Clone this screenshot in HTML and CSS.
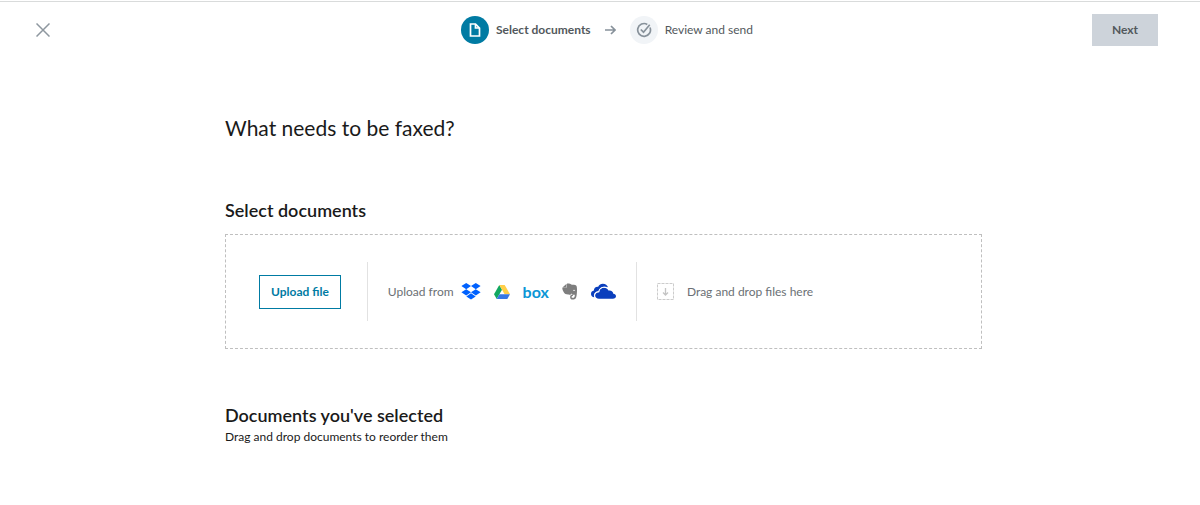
FILE: index.html
```html
<!DOCTYPE html>
<html lang="en">

<head>
    <meta charset="UTF-8">
    <title>Send a fax</title>
    <meta name="viewport" content="width=device-width, initial-scale=1.0">
    <link rel="stylesheet" href="styles.css">
</head>

<body>
    <header class="header">
        <button class="close-btn" type="button" aria-label="Close">
            <svg width="14" height="14" viewBox="0 0 14 14"><path d="M.5.5l13 13M13.5.5l-13 13" fill="none" stroke="#8e979f" stroke-width="1.5"/></svg>
        </button>
        <nav class="steps">
            <a class="step active" href="#documents">
                <span class="step-icon">
                    <svg width="12" height="14" viewBox="0 0 12 14"><path d="M1.5 1h5l4 4v8h-9zM6.5 1v4h4" fill="none" stroke="#fff" stroke-width="1.7"/></svg>
                </span>
                Select documents
            </a>
            <svg class="arrow" width="11" height="10" viewBox="0 0 11 10"><path d="M0 5h10M6 1l4 4-4 4" fill="none" stroke="#87919a" stroke-width="1.7"/></svg>
            <a class="step" href="#review">
                <span class="step-icon">
                    <svg width="16" height="16" viewBox="0 0 16 16"><path d="M14 5.5A6.4 6.4 0 1 1 11.3 2.4M4.8 7.5l2.7 2.7 6.2-7.4" fill="none" stroke="#87919a" stroke-width="1.7"/></svg>
                </span>
                Review and send
            </a>
        </nav>
        <button class="next-btn" type="button">Next</button>
    </header>

    <main class="content" id="documents">
        <h1>What needs to be faxed?</h1>

        <section>
            <h2>Select documents</h2>
            <div class="dropzone">
                <div class="upload">
                    <button class="upload-btn" type="button">Upload file</button>
                </div>
                <div class="sources">
                    <span>Upload from</span>
                    <div class="source-list">
                        <button class="source" type="button" aria-label="Dropbox">
                            <svg width="20" height="17" viewBox="0 0 20 17"><path d="M5.2 0L10 3.1 5.2 6.2.4 3.1zM14.8 0l4.8 3.1-4.8 3.1L10 3.1zM5.2 6.2L10 9.3l-4.8 3.1L.4 9.3zM14.8 6.2l4.8 3.1-4.8 3.1L10 9.3zM5.3 13.4l4.7-3.1 4.7 3.1-4.7 3.1z" fill="#0061fe"/></svg>
                        </button>
                        <button class="source" type="button" aria-label="Google Drive">
                            <svg width="16" height="14" viewBox="0 0 16 14">
                                <path d="M5.3 0L8 4.7 2.7 14 0 9.3z" fill="#11a861"/>
                                <path d="M5.3 0h5.4L16 9.3h-5.4z" fill="#ffcf48"/>
                                <path d="M5.4 9.3H16L13.3 14H2.7z" fill="#3777e3"/>
                            </svg>
                        </button>
                        <button class="source box-logo" type="button">box</button>
                        <button class="source" type="button" aria-label="Evernote">
                            <svg width="16" height="17" viewBox="0 0 16 17">
                                <path d="M4.6.7v2.6c0 .6-.3.9-.9.9H.7zM5 .5C6.4.3 8.4.4 9.1 1.5c1.5.3 4.2.3 5 .9.9.8 1 3.1.9 5.500-.1 3.200-.5 6.200-1.300 7.300-.7 1-1.800 1.300-3 1.300-1.700 0-2.600-1-2.600-2.600 0-1.500 1-2.500 2.800-2.400v1.500c-.8 0-1.300.3-1.300.9s.5.9 1.300.9c1.600 0 1.900-1.100 1.900-3.100-1.300.2-2.700-.4-3.100-1.300-.5 1.100-1.600 1.500-3.600 1.200-2.100-.3-3.600-.8-4.300-2.400C.8 7.500.1 6 .4 4.500h3.500c.8 0 1.100-.4 1.100-1.200z" fill="#7e7e7e"/>
                                <path d="M11 7.8c.2-1.200 1.700-1.400 2.200.1-.8-.3-1.400-.3-2.200-.1z" fill="#fff"/>
                            </svg>
                        </button>
                        <button class="source" type="button" aria-label="OneDrive">
                            <svg width="25" height="17" viewBox="0 0 26 17">
                                <path d="M3.400 14.500C1.400 14.200 0 12.800 0 11c0-1.900 1.300-3.200 3-3.500C3 4.900 5 3.400 7.300 3.700 8.500 1.500 10.200.4 12.300.4c2.700 0 4.800 1.600 5.500 4C12 2.400 8.300 4.800 7.800 8.300c-2.700.1-4.600 1.700-4.600 4.100 0 .8.100 1.500.2 2.100z" fill="#0b3fbd"/>
                                <path d="M8.300 16c-2.300 0-4-1.300-4-3.300s1.700-3.500 4.300-3.400C8.500 6.500 10.800 4.700 13.400 4.700c2.200 0 3.800 1 4.700 2.800 2.800-.6 5 1 5.100 3.400 1.600.3 2.800 1 2.800 2.500 0 1.600-1.400 2.600-3.300 2.600z" fill="#0b3fbd"/>
                                <path d="M3.800 14.500c-1-3.300 1-5.600 4.400-5.800C8.600 5 12.500 2.800 18 4.800" fill="none" stroke="#fff" stroke-width=".9"/>
                            </svg>
                        </button>
                    </div>
                </div>
                <div class="drop-hint">
                    <svg width="17" height="17" viewBox="0 0 17 17">
                        <path d="M.5.5h16v16H.5z" fill="none" stroke="#ccc" stroke-dasharray="3 1"/>
                        <path d="M8.5 5v7M6 9.500L8.500 12 11 9.500" fill="none" stroke="#c4c4c4" stroke-width="1.3"/>
                    </svg>
                    <span>Drag and drop files here</span>
                </div>
            </div>
        </section>

        <section>
            <h2>Documents you've selected</h2>
            <p>Drag and drop documents to reorder them</p>
        </section>
    </main>
</body>

</html>
```
FILE: styles.css
```css
* {
    box-sizing: border-box;
}

body {
    margin: 0;
    padding-top: 1px;
    background: #fff;
    color: #1a1a1a;
    font-family: Lato, "Liberation Sans", sans-serif;
    font-size: 12px;
    line-height: 20px;
}

button {
    padding: 0;
    border: none;
    background: none;
    font: inherit;
    cursor: pointer;
}

svg {
    display: block;
}

.header {
    display: grid;
    grid-template-columns: 1fr auto 1fr;
    align-items: center;
    padding: 12px 22px 12px 36px;
    border-top: 1px solid #d9dbdb;
}

.close-btn {
    justify-self: start;
}

.steps {
    display: flex;
    align-items: center;
    gap: 14px;
}

.step {
    display: flex;
    align-items: center;
    gap: 7px;
    color: #52585c;
    text-decoration: none;
}

.step-icon {
    display: flex;
    align-items: center;
    justify-content: center;
    width: 28px;
    height: 28px;
    border-radius: 50%;
    background: #f1f4f7;
}

.step.active {
    font-weight: bold;
}

.step.active .step-icon {
    background: #007ba3;
}

.next-btn {
    justify-self: end;
    margin-right: 20px;
    padding: 6px 20px;
    background: #cdd3da;
    color: #52585c;
    font-weight: bold;
}

.content {
    max-width: 764px;
    margin: 0 auto;
    padding: 54px 0 54px 7px;
}

h1 {
    margin: 0;
    font-size: 21px;
    font-weight: normal;
    line-height: 32px;
}

h2 {
    margin: 0;
    font-size: 18px;
    font-weight: 600;
    line-height: 24px;
}

section {
    margin-top: 54px;
}

p {
    margin: 0;
}

.dropzone {
    display: flex;
    margin-top: 12px;
    padding: 27px 0;
    border: 1px dashed #bfbfbf;
    color: #6b7075;
}

.upload,
.sources,
.drop-hint {
    display: flex;
    align-items: center;
    height: 59px;
}

.upload {
    padding: 0 26px 0 33px;
}

.upload-btn {
    padding: 6px 11px;
    border: 1px solid #007ba3;
    color: #007ba3;
    font-weight: bold;
}

.sources {
    gap: 7px;
    padding: 0 20px;
    border-left: 1px solid #e2e2e2;
}

.source-list {
    display: flex;
    align-items: center;
    gap: 13px;
}

.box-logo {
    color: #0b96d6;
    font-size: 16px;
    font-weight: bold;
}

.drop-hint {
    gap: 13px;
    padding-left: 20px;
    border-left: 1px solid #e2e2e2;
}
```
